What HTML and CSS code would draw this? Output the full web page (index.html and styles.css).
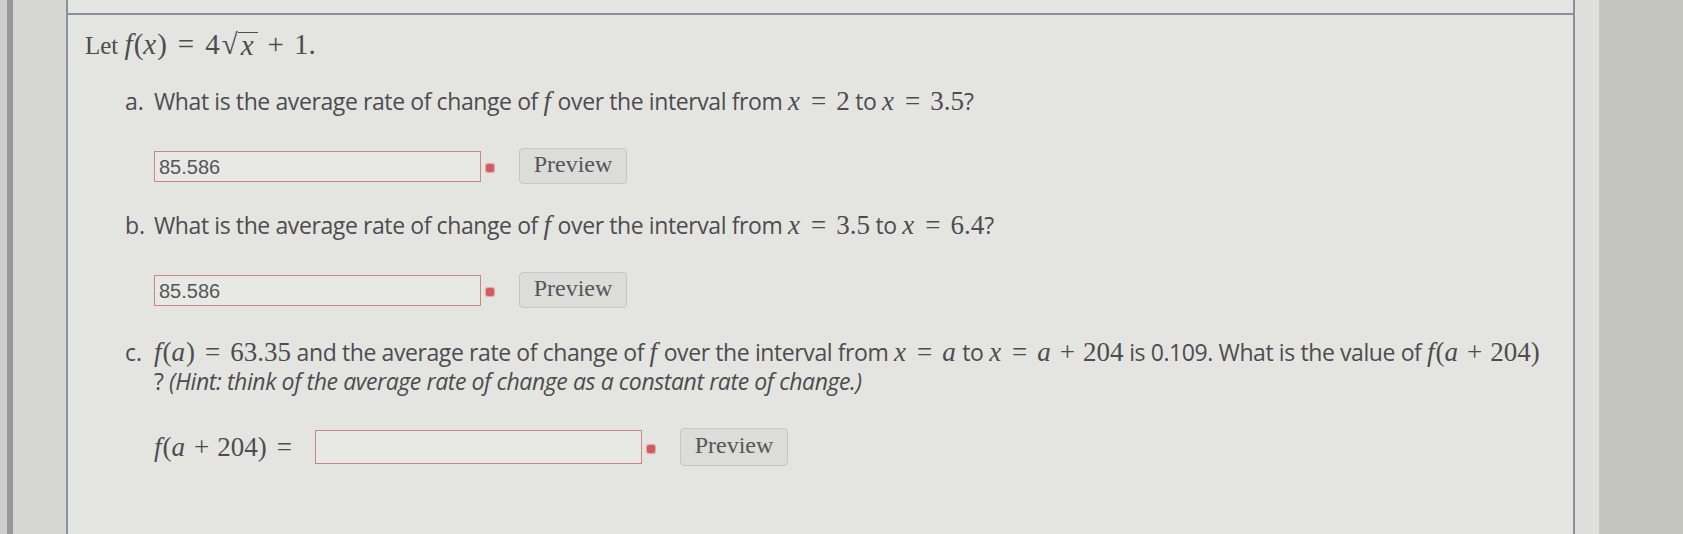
FILE: index.html
```html
<!DOCTYPE html>
<html>
<head>
<meta charset="utf-8">
<link rel="stylesheet" href="styles.css">
</head>
<body>
<div class="screen">
  <div class="edge"></div>
  <div class="bezel"></div>
  <div class="gutter"></div>
  <div class="page">
    <div class="topbar"></div>
    <div class="question">
      <p class="intro">Let <span class="m big"><i>f</i>(<i>x</i>)<span class="rel">=</span>4<span class="sqrt"><span class="rad">√</span><span class="under"><i>x</i></span></span><span class="bin">+</span>1.</span></p>

      <div class="item">
        <span class="label">a.</span>
        <div class="body">
          <p class="qtext">What is the average rate of change of <span class="m"><i>f</i></span> over the interval from <span class="m"><i>x</i><span class="rel">=</span>2</span> to <span class="m"><i>x</i><span class="rel">=</span>3.5</span>?</p>
          <div class="answer">
            <div class="field">85.586</div>
            <span class="flag"></span>
            <button class="preview">Preview</button>
          </div>
        </div>
      </div>

      <div class="item">
        <span class="label">b.</span>
        <div class="body">
          <p class="qtext">What is the average rate of change of <span class="m"><i>f</i></span> over the interval from <span class="m"><i>x</i><span class="rel">=</span>3.5</span> to <span class="m"><i>x</i><span class="rel">=</span>6.4</span>?</p>
          <div class="answer">
            <div class="field">85.586</div>
            <span class="flag"></span>
            <button class="preview">Preview</button>
          </div>
        </div>
      </div>

      <div class="item item-c">
        <span class="label">c.</span>
        <div class="body">
          <p class="qtext"><span class="m"><i>f</i>(<i>a</i>)<span class="rel">=</span>63.35</span> and the average rate of change of <span class="m"><i>f</i></span> over the interval from <span class="m"><i>x</i><span class="rel">=</span><i>a</i></span> to <span class="m"><i>x</i><span class="rel">=</span><i>a</i><span class="bin">+</span>204</span> is 0.109. What is the value of <span class="m"><i>f</i>(<i>a</i><span class="bin">+</span>204)</span><br>? <em>(Hint: think of the average rate of change as a constant rate of change.)</em></p>
          <div class="answer tall">
            <span class="m prompt"><i>f</i>(<i>a</i><span class="bin">+</span>204)<span class="rel">=</span></span>
            <div class="field empty"></div>
            <span class="flag"></span>
            <button class="preview">Preview</button>
          </div>
        </div>
      </div>
    </div>
  </div>
  <div class="rstrip"></div>
  <div class="rgrey"></div>
</div>
</body>
</html>
```

FILE: styles.css
```css
html, body {
  margin: 0;
  padding: 0;
}
body {
  width: 1683px;
  height: 534px;
  overflow: hidden;
  background: #c9c9c3;
}
.screen {
  display: flex;
  height: 534px;
}
.edge {
  width: 7px;
  background: #cfd0cb;
}
.bezel {
  width: 6px;
  background: #97989a;
}
.gutter {
  width: 53px;
  background: #d6d7d2;
}
.page {
  width: 1505px;
  background: #e4e5e0;
  border-left: 2px solid #8c8ea0;
  border-right: 2px solid #8c8ea0;
  display: flex;
  flex-direction: column;
}
.topbar {
  height: 13px;
  border-bottom: 2px solid #8c8ea0;
}
.question {
  font-family: "Open Sans", "Noto Sans", sans-serif;
  font-size: 23px;
  line-height: 29px;
  letter-spacing: -0.4px;
  color: #4c4c51;
}
.question p {
  margin: 0;
  white-space: nowrap;
}
.intro {
  margin-top: 15px !important;
  padding-left: 17px;
  font-family: "Liberation Serif", serif;
  font-size: 25px;
  letter-spacing: 0;
}
.item {
  display: flex;
  padding-left: 57px;
  margin-top: 27px;
}
.item + .item {
  margin-top: 27px;
}
.item.item-c {
  margin-top: 30px;
}
.label {
  width: 29px;
  flex: none;
  letter-spacing: 0;
}
.body {
  display: flex;
  flex-direction: column;
}
.qtext {
  margin-bottom: 32px !important;
}
.m {
  font-family: "Liberation Serif", "DejaVu Serif", serif;
  font-size: 27px;
  letter-spacing: 0;
}
.m i {
  font-style: italic;
  margin-right: 1px;
}
.rel {
  margin: 0 10px;
}
.bin {
  margin: 0 8px;
}
.m.big {
  font-size: 29px;
}
.big .rel {
  margin: 0 11px;
}
.big .bin {
  margin: 0 10px;
}
.sqrt {
  display: inline-flex;
  align-items: flex-end;
  margin-left: 2px;
}
.rad {
  font-size: 29px;
  line-height: 28px;
}
.under {
  border-top: 1.5px solid #4c4c51;
  line-height: 25px;
  padding: 0 3px;
}
.answer {
  display: flex;
  align-items: center;
  height: 36px;
}
.answer.tall {
  height: 38px;
}
.prompt {
  margin-right: 13px;
}
.field {
  width: 321px;
  height: 29px;
  border: 1.5px solid #cf8583;
  background: #e8e9e4;
  font-family: "Liberation Sans", Arial, sans-serif;
  font-size: 20px;
  line-height: 30px;
  letter-spacing: 0;
  padding-left: 4px;
  color: #55565a;
}
.field.empty {
  height: 32px;
}
.flag {
  width: 8px;
  height: 8px;
  margin-left: 5px;
  margin-top: 4px;
  border-radius: 2px;
  background: #d35a62;
  box-shadow: 0 0 1px 1px rgba(211, 90, 98, 0.45);
}
.preview {
  margin-left: 25px;
  width: 108px;
  height: 36px;
  border: 1.5px solid #c6c7c2;
  border-radius: 4px;
  background: #dcddd8;
  font-family: "Liberation Serif", serif;
  font-size: 24px;
  letter-spacing: 0;
  color: #55565a;
  padding: 0;
  padding-bottom: 4px;
}
.tall .preview {
  height: 38px;
}
.rstrip {
  width: 24px;
  background: #dfe0db;
}
.rgrey {
  flex: 1;
  background: #c6c6c0;
}
```
